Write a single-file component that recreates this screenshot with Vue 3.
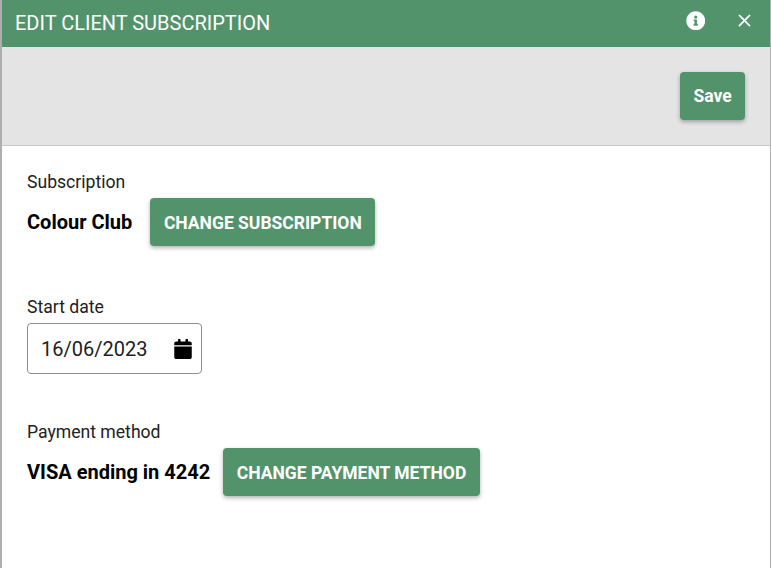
<script setup>
</script>

<template>
  <div class="page">
    <div class="dialog">
      <header class="head">
        <span class="title">EDIT CLIENT SUBSCRIPTION</span>
        <div class="head-icons">
          <svg class="info" viewBox="0 0 512 512" width="19.500" height="19.500"><path fill="#fff" d="M256 8C119 8 8 119 8 256s111 248 248 248 248-111 248-248S393 8 256 8zm0 110c23.200 0 42 18.800 42 42s-18.800 42-42 42-42-18.800-42-42 18.800-42 42-42zm56 254c0 6.600-5.400 12-12 12h-88c-6.600 0-12-5.400-12-12v-24c0-6.600 5.400-12 12-12h12v-64h-12c-6.600 0-12-5.400-12-12v-24c0-6.600 5.400-12 12-12h64c6.600 0 12 5.400 12 12v100h12c6.600 0 12 5.400 12 12v24z"/></svg>
          <svg class="close" viewBox="0 0 24 24" width="21" height="21"><path fill="#fff" d="M19 6.410 17.590 5 12 10.590 6.410 5 5 6.410 10.590 12 5 17.590 6.410 19 12 13.410 17.590 19 19 17.590 13.410 12z"/></svg>
        </div>
      </header>
      <div class="toolbar">
        <button class="btn save">Save</button>
      </div>
      <main class="body">
        <section class="sub">
          <div class="label">Subscription</div>
          <div class="row">
            <strong class="value">Colour Club</strong>
            <button class="btn wide">CHANGE SUBSCRIPTION</button>
          </div>
        </section>
        <section class="start">
          <div class="label">Start date</div>
          <div class="date">
            <span>16/06/2023</span>
            <svg viewBox="0 0 448 512" width="18" height="20"><path fill="#000" d="M0 464c0 26.500 21.500 48 48 48h352c26.500 0 48-21.500 48-48V192H0v272zM400 64h-48V16c0-8.800-7.200-16-16-16h-32c-8.800 0-16 7.200-16 16v48H160V16c0-8.800-7.200-16-16-16h-32c-8.800 0-16 7.200-16 16v48H48C21.500 64 0 85.500 0 112v48h448v-48c0-26.500-21.500-48-48-48z"/></svg>
          </div>
        </section>
        <section class="pay">
          <div class="label">Payment method</div>
          <div class="row pay-row">
            <strong class="value">VISA ending in 4242</strong>
            <button class="btn wide">CHANGE PAYMENT METHOD</button>
          </div>
        </section>
      </main>
    </div>
  </div>
</template>

<style>
html, body { margin: 0; padding: 0; background: #fff; overflow: hidden; }
</style>

<style scoped>
.page {
  width: 771px;
  height: 568px;
  box-sizing: border-box;
  border-left: 2px solid #aeaeae;
  border-right: 1px solid #aeaeae;
  font-family: Roboto, "Liberation Sans", sans-serif;
  color: #000;
  overflow: hidden;
}
.dialog { display: flex; flex-direction: column; height: 100%; }
.head {
  height: 47px;
  background: #53936b;
  display: flex;
  align-items: center;
  justify-content: space-between;
  padding: 0 15px 0 13px;
  color: #fff;
  flex: none;
}
.title { font-size: 20px; font-weight: 400; position: relative; top: -1px; }
.head-icons { display: flex; align-items: center; gap: 29px; position: relative; top: -3px; }
.info, .close { display: block; }
.toolbar {
  background: #e4e4e4;
  border-bottom: 1px solid #c8c8c8;
  display: flex;
  justify-content: flex-end;
  align-items: flex-start;
  padding: 25px 25px 0 0;
  box-sizing: border-box;
  height: 99px;
  flex: none;
}
.btn {
  border: 0;
  background: #53936b;
  color: #fff;
  font-family: inherit;
  font-weight: 700;
  font-size: 17.500px;
  border-radius: 4px;
  height: 48px;
  padding: 1px 13.600px 0;
  box-shadow: 0 2px 4px rgba(0,0,0,.3);
  white-space: nowrap;
}
.save { width: 65px; padding: 0; }
.body { padding: 24px 25px 0; }
.label { font-size: 17.600px; line-height: 24px; color: #212121; }
.row { display: flex; align-items: center; margin-top: 4px; }
.value { font-size: 20px; font-weight: 700; }
.sub .value { margin-right: 18px; }
.pay-row .value { margin-right: 13px; }
.start { margin-top: 49px; }
.pay { margin-top: 46px; }
.date {
  margin-top: 4px;
  width: 175px;
  height: 51px;
  box-sizing: border-box;
  border: 1px solid #8e8e8e;
  border-radius: 4px;
  display: flex;
  align-items: center;
  justify-content: space-between;
  padding: 0 9px 0 13px;
  font-size: 20px;
  color: #212121;
}
</style>
